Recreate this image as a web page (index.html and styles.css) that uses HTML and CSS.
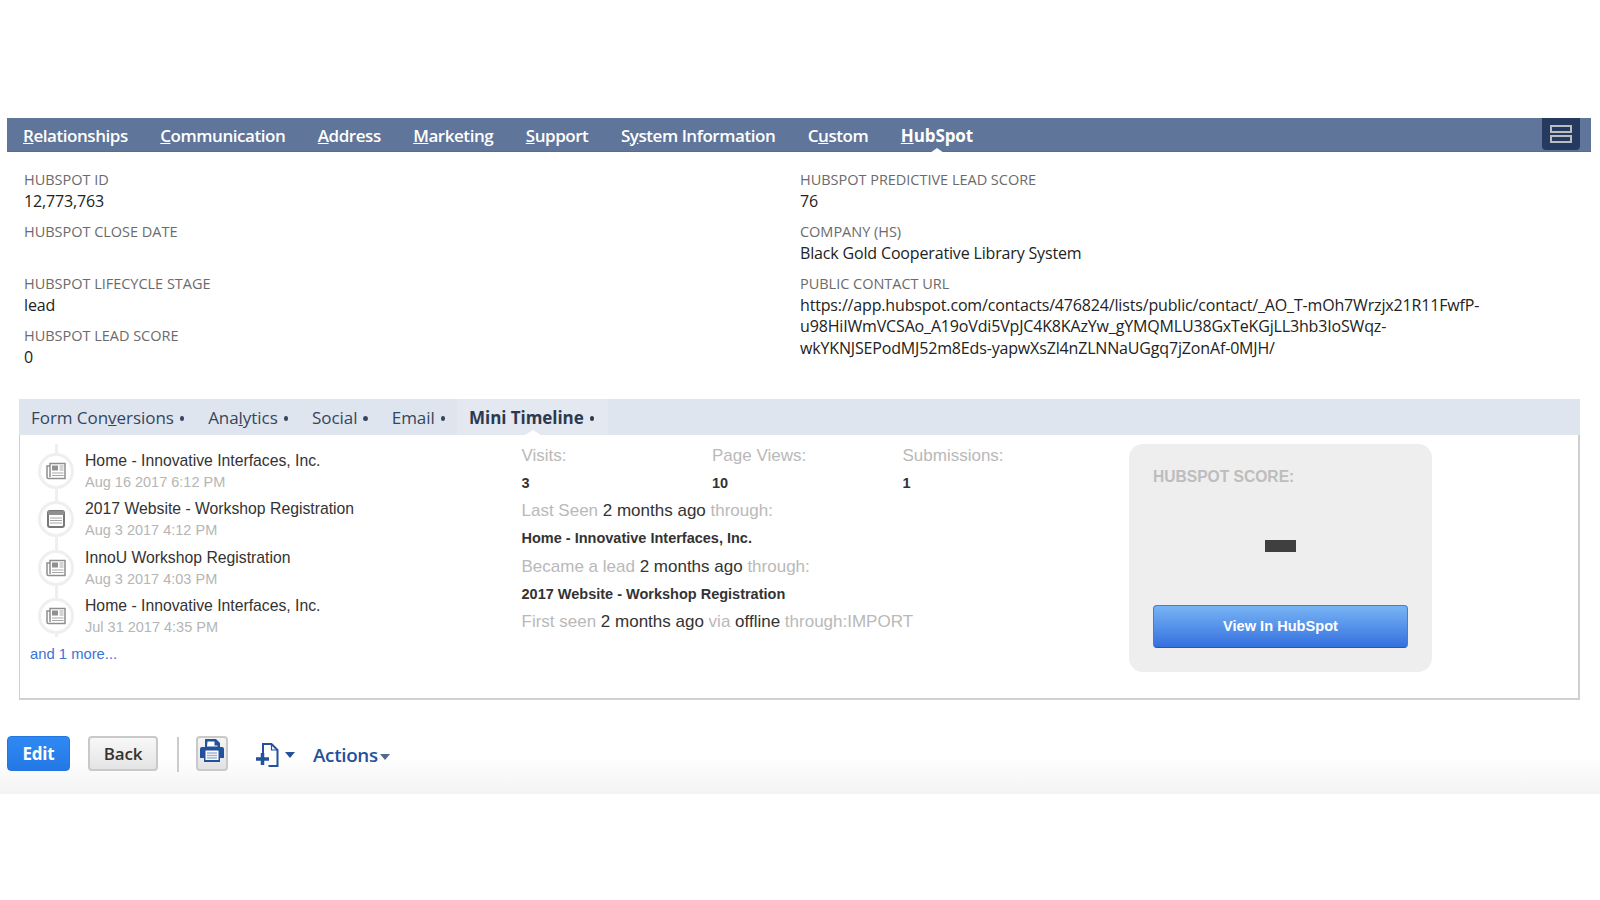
FILE: index.html
```html
<!DOCTYPE html>
<html lang="en">
<head>
<meta charset="utf-8">
<title>HubSpot</title>
<link rel="stylesheet" href="styles.css">
</head>
<body>
<div class="page">
  <nav class="nav">
    <a class="nav-item"><u>R</u>elationships</a>
    <a class="nav-item"><u>C</u>ommunication</a>
    <a class="nav-item"><u>A</u>ddress</a>
    <a class="nav-item"><u>M</u>arketing</a>
    <a class="nav-item"><u>S</u>upport</a>
    <a class="nav-item">S<u>y</u>stem Information</a>
    <a class="nav-item">C<u>u</u>stom</a>
    <a class="nav-item active"><u>H</u>ubSpot</a>
    <span class="nav-toggle"><i></i><i></i></span>
  </nav>

  <section class="fields">
    <div class="field-col">
      <div class="field"><div class="label">HUBSPOT ID</div><div class="value">12,773,763</div></div>
      <div class="field"><div class="label">HUBSPOT CLOSE DATE</div><div class="value">&nbsp;</div></div>
      <div class="field"><div class="label">HUBSPOT LIFECYCLE STAGE</div><div class="value">lead</div></div>
      <div class="field"><div class="label">HUBSPOT LEAD SCORE</div><div class="value">0</div></div>
    </div>
    <div class="field-col right">
      <div class="field"><div class="label">HUBSPOT PREDICTIVE LEAD SCORE</div><div class="value">76</div></div>
      <div class="field"><div class="label">COMPANY (HS)</div><div class="value">Black Gold Cooperative Library System</div></div>
      <div class="field"><div class="label">PUBLIC CONTACT URL</div><div class="value">https://app.hubspot.com/contacts/476824/lists/public/contact/_AO_T-mOh7Wrzjx21R11FwfP-<br>u98HiIWmVCSAo_A19oVdi5VpJC4K8KAzYw_gYMQMLU38GxTeKGjLL3hb3IoSWqz-<br>wkYKNJSEPodMJ52m8Eds-yapwXsZl4nZLNNaUGgq7jZonAf-0MJH/</div></div>
    </div>
  </section>

  <section class="subsection">
    <div class="subtabs">
      <a class="subtab">Form Con<u>v</u>ersions<b></b></a>
      <a class="subtab">Ana<u>l</u>ytics<b></b></a>
      <a class="subtab">Social<b></b></a>
      <a class="subtab">Email<b></b></a>
      <a class="subtab active">Mini Timeline<b></b></a>
    </div>
    <div class="panel">
      <div class="timeline">
        <div class="tl-item">
          <span class="tl-icon"><svg width="20" height="18" viewBox="0 0 20 18"><path class="ic" d="M4 1.500h15v15H2.500a1.500 1.500 0 0 1-1.500-1.500V4h3zM4 4v11"/><path class="ic-f" d="M6 3.500h6v5H6z"/><path class="ic-t" d="M13.500 4h4M13.500 6h4M13.500 8h4M6 11h11.500M6 13.500h11.500"/></svg></span>
          <div class="tl-text"><div class="tl-title">Home - Innovative Interfaces, Inc.</div><div class="tl-date">Aug 16 2017 6:12 PM</div></div>
        </div>
        <div class="tl-item">
          <span class="tl-icon"><svg width="18" height="18" viewBox="0 0 18 18"><rect x="1" y="1" width="16" height="16" rx="2" class="ic-b"/><path class="ic-f" d="M1 1h16v4H1z"/><path class="ic-t" d="M3 8h12M3 10.500h12M3 13h12"/></svg></span>
          <div class="tl-text"><div class="tl-title">2017 Website - Workshop Registration</div><div class="tl-date">Aug 3 2017 4:12 PM</div></div>
        </div>
        <div class="tl-item">
          <span class="tl-icon"><svg width="20" height="18" viewBox="0 0 20 18"><path class="ic" d="M4 1.500h15v15H2.500a1.500 1.500 0 0 1-1.500-1.500V4h3zM4 4v11"/><path class="ic-f" d="M6 3.500h6v5H6z"/><path class="ic-t" d="M13.500 4h4M13.500 6h4M13.500 8h4M6 11h11.500M6 13.500h11.500"/></svg></span>
          <div class="tl-text"><div class="tl-title">InnoU Workshop Registration</div><div class="tl-date">Aug 3 2017 4:03 PM</div></div>
        </div>
        <div class="tl-item">
          <span class="tl-icon"><svg width="20" height="18" viewBox="0 0 20 18"><path class="ic" d="M4 1.500h15v15H2.500a1.500 1.500 0 0 1-1.500-1.500V4h3zM4 4v11"/><path class="ic-f" d="M6 3.500h6v5H6z"/><path class="ic-t" d="M13.500 4h4M13.500 6h4M13.500 8h4M6 11h11.500M6 13.500h11.500"/></svg></span>
          <div class="tl-text"><div class="tl-title">Home - Innovative Interfaces, Inc.</div><div class="tl-date">Jul 31 2017 4:35 PM</div></div>
        </div>
        <a class="more">and 1 more...</a>
      </div>
      <div class="stats">
        <div class="stat-grid">
          <span class="muted">Visits:</span><span class="muted">Page Views:</span><span class="muted">Submissions:</span>
          <b class="num">3</b><b class="num">10</b><b class="num">1</b>
        </div>
        <p class="line muted">Last Seen <span class="dark">2 months ago</span> through:</p>
        <p class="source">Home - Innovative Interfaces, Inc.</p>
        <p class="line muted">Became a lead <span class="dark">2 months ago</span> through:</p>
        <p class="source">2017 Website - Workshop Registration</p>
        <p class="line muted">First seen <span class="dark">2 months ago</span> via <span class="dark">offline</span> through:IMPORT</p>
      </div>
      <aside class="score">
        <div class="score-title">HUBSPOT SCORE:</div>
        <div class="score-value"><span class="dash"></span></div>
        <a class="score-btn">View In HubSpot</a>
      </aside>
    </div>
  </section>

  <footer class="toolbar">
    <button class="btn primary">Edit</button>
    <button class="btn">Back</button>
    <span class="divider"></span>
    <span class="print"><svg width="26" height="26" viewBox="0 0 26 26"><path class="pr" d="M6 1h11l4 4v5H6z"/><path class="pr-w" d="M8.500 3.500h7v4h3v1h-10.500z"/><path class="pr" d="M3 9h20a2 2 0 0 1 2 2v9h-4v4H5v-4H1v-9a2 2 0 0 1 2-2z"/><path class="pr-w" d="M6.500 12.500h13v9.500h-13z"/><path class="pr-l" d="M8 15h10M8 17.500h10M8 20h10"/></svg></span>
    <span class="newrec"><svg width="26" height="26" viewBox="0 0 26 26"><path class="nr-s" d="M8 11V2h8.500l6 6v16h-9"/><path class="nr-s thin" d="M16.500 2v6h6"/><path class="nr-p" d="M1 17h13M7.500 11v12"/></svg><i class="caret"></i></span>
    <span class="actions">Actions<i class="caret gray"></i></span>
  </footer>
</div>
</body>
</html>
```

FILE: styles.css
```css
* { box-sizing: border-box; }
html, body { margin: 0; background: #fff; }
body { width: 1600px; height: 900px; overflow: hidden; font-family: "Open Sans", "Liberation Sans", sans-serif; }
.page { padding-top: 118px; }

.nav { position: relative; display: flex; align-items: center; gap: 32.500px; height: 34px; margin: 0 9px 0 7px; padding: 1px 0 0 16px; background: #5f7599; border-bottom: 1px solid #566d92; }
.nav-item { position: relative; color: #fff; font-size: 17px; font-weight: 600; letter-spacing: -.45px; line-height: 33px; }
.nav-item.active { font-weight: 700; letter-spacing: -.1px; }
.nav-item.active::after { content: ""; position: absolute; left: 50%; bottom: -1px; margin-left: -7px; border: 7px solid transparent; border-top: 0; border-bottom: 5px solid #fff; }
.nav-toggle { position: absolute; right: 11px; top: 0; display: flex; flex-direction: column; justify-content: center; gap: 2px; width: 38px; height: 32px; padding: 0 8px; background: #26395f; border-radius: 0 0 4px 4px; }
.nav-toggle i { display: block; height: 8px; border: 2px solid #b9bcc0; }

.fields { display: flex; padding: 17px 0 0 24px; height: 247px; }
.field-col { width: 776px; }
.field-col.right { width: 700px; }
.field { margin-bottom: 9px; }
.label { color: #6b6b6b; font-size: 14.500px; line-height: 21.500px; letter-spacing: -.02px; }
.value { color: #222; font-size: 16px; line-height: 21.500px; letter-spacing: -.16px; }

.subsection { margin: 0 20px 0 19px; }
.subtabs { display: flex; height: 36px; background: #dfe5ef; }
.subtab { position: relative; padding: 1px 12px 0; color: #35455d; font-size: 17px; line-height: 35px; letter-spacing: -.05px; }
.subtab b { display: inline-block; width: 4.500px; height: 5px; margin-left: 5.800px; vertical-align: 3px; background: currentColor; border-radius: 50%; }
.subtab.active { padding-right: 14px; background: #e3e8f1; color: #2c3a50; font-weight: 700; }
.subtab.active::after { content: ""; position: absolute; left: 50%; bottom: 0; margin-left: -8px; border: 8px solid transparent; border-top: 0; border-bottom: 5px solid #fff; }

.panel { position: relative; display: flex; height: 265px; border: solid #d0d0d0; border-width: 0 2px 2px 1px; font-family: "Liberation Sans", Arial, sans-serif; }

.timeline { position: relative; width: 501.500px; padding: 12px 0 0 18px; }
.timeline::before { content: ""; position: absolute; left: 35px; top: 9px; width: 3px; height: 193px; background: #efefef; }
.tl-item { position: relative; display: flex; align-items: center; gap: 11px; height: 48.300px; }
.tl-icon { display: flex; flex: none; align-items: center; justify-content: center; width: 36px; height: 36px; background: #fff; border: 3px solid #efefef; border-radius: 50%; }
.ic { fill: #fff; stroke: #8f8f8f; stroke-width: 1.500; }
.ic-b { fill: #fff; stroke: #777; stroke-width: 2; }
.ic-f { fill: #909090; }
.ic-t { fill: none; stroke: #a5a5a5; stroke-width: 1; }
.tl-title { color: #333; font-size: 15.750px; line-height: 21px; }
.tl-date { padding-top: 2px; color: #b5b5b5; font-size: 14.500px; line-height: 19px; }
.more { display: block; margin: 4px 0 0 -8px; color: #3b73d9; font-size: 14.800px; line-height: 20px; }

.stats { width: 607.500px; padding-top: 7px; }
.stat-grid { display: grid; grid-template-columns: repeat(3, 190.500px); grid-auto-rows: 27px; margin-bottom: 1px; font-size: 17px; align-items: center; }
.num { color: #333; font-size: 14.500px; }
.muted { color: #b9b9b9; }
.dark { color: #333; }
.line { margin: 0; font-size: 17px; line-height: 28px; }
.source { margin: 0; color: #333; font-size: 14.500px; font-weight: 700; line-height: 27.500px; }

.score { display: flex; flex-direction: column; width: 303px; height: 228px; margin-top: 9px; padding: 23px 24px 0; background: #eee; border-radius: 14px; }
.score-title { color: #bdbdbd; font-size: 15.600px; font-weight: 700; line-height: 19px; }
.score-value { display: flex; justify-content: center; height: 119px; padding-top: 54px; }
.dash { width: 31px; height: 12px; background: #3f3f3f; }
.score-btn { height: 43px; color: #fff; font-size: 14.600px; font-weight: 700; line-height: 41px; text-align: center; background: linear-gradient(#78b4f4, #3470de); border: 1px solid #3f7ee0; border-bottom-color: #1f57cb; border-radius: 4px; }

.toolbar { display: flex; align-items: flex-start; height: 94px; padding: 36px 0 0 7px; background: linear-gradient(#fff 60%, #f3f3f3); }
.btn { width: 70px; height: 35px; margin: 0 0 0 18px; padding: 0; color: #333; font-family: "Open Sans", sans-serif; font-size: 17px; font-weight: 600; letter-spacing: -.2px; background: linear-gradient(#f8f8f8, #e4e4e4); border: 2px solid #c9c9c9; border-radius: 4px; }
.btn.primary { width: 63px; margin-left: 0; color: #fff; font-weight: 700; background: linear-gradient(#3089f2, #2378e6); border: 1px solid #2277e2; }
.divider { width: 2px; height: 35px; margin: 1px 17px 0 19px; background: #ccc; }
.print { display: flex; align-items: flex-start; justify-content: center; width: 32px; height: 35px; padding-top: 0; background: linear-gradient(#f5f5f5, #e2e2e2); border: 2px solid #c9c9c9; border-radius: 4px; }
.pr { fill: #23519b; }
.pr-w { fill: #fff; }
.pr-l { stroke: #9fb4d2; stroke-width: 1.500; fill: none; }
.newrec { display: flex; align-items: center; margin: 6px 0 0 27px; }
.nr-s { fill: none; stroke: #23519b; stroke-width: 2; }
.nr-s.thin { stroke-width: 1.200; }
.nr-p { fill: none; stroke: #23519b; stroke-width: 3.500; }
.caret { display: inline-block; margin-left: 4px; vertical-align: 2px; border: 5px solid transparent; border-top: 6px solid #23519b; border-bottom: 0; }
.caret.gray { margin-left: 2px; border-top-color: #506a93; }
.actions { margin: 6px 0 0 18px; color: #23519b; font-size: 18.800px; font-weight: 600; letter-spacing: -.3px; }
```
